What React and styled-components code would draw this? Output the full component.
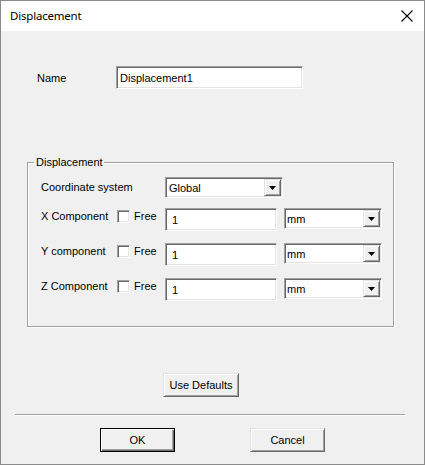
import React from "react";
import styled, { createGlobalStyle, css } from "styled-components";

const Global = createGlobalStyle`
  html, body { margin: 0; padding: 0; background: #f0f0f0; }
  body { font-family: "Liberation Sans", Arial, sans-serif; font-size: 11px; color: #000; }
  * { box-sizing: border-box; }
`;

const Window = styled.div`
  width: 425px;
  height: 465px;
  border: 1px solid #8a8a8a;
  background: #f0f0f0;
  display: flex;
  flex-direction: column;
`;

const TitleBar = styled.div`
  height: 30px;
  background: #fff;
  display: flex;
  align-items: center;
  justify-content: space-between;
  padding: 0 10px 0 9px;
  flex-shrink: 0;
`;

const Title = styled.span`
  font-family: "Segoe UI", "Noto Sans", sans-serif;
  font-size: 11.5px;
  letter-spacing: -0.2px;
  color: #000;
  margin-top: -1px;
`;

const CloseBtn = styled.div`
  width: 14px;
  height: 14px;
  display: flex;
  align-items: center;
  justify-content: center;
  margin-top: -1px;
`;

const Body = styled.div`
  display: flex;
  flex-direction: column;
  flex: 1;
`;

const NameRow = styled.div`
  display: flex;
  align-items: center;
  margin: 35px 0 0 36px;
  height: 23px;
`;

const NameLabel = styled.span`
  width: 79px;
`;

const sunken = css`
  border-style: solid;
  border-width: 1px;
  border-color: #a0a0a0 #fff #fff #a0a0a0;
  box-shadow: inset 1px 1px 0 #696969, inset -1px -1px 0 #e3e3e3;
  background: #fff;
`;

const raised = css`
  border-style: solid;
  border-width: 1px;
  border-color: #e3e3e3 #696969 #696969 #e3e3e3;
  box-shadow: inset 1px 1px 0 #fff, inset -1px -1px 0 #a0a0a0;
  background: #f0f0f0;
`;

const TextBox = styled.div`
  ${sunken};
  width: ${(p) => p.$w}px;
  height: 23px;
  display: flex;
  align-items: center;
  padding-left: ${(p) => p.$pl || 4}px;
  color: #000;
  white-space: nowrap;
`;

const Group = styled.div`
  position: relative;
  margin: 73px 0 0 26px;
  width: 367px;
  height: 165px;
  border: 1px solid #a0a0a0;
  box-shadow: 1px 1px 0 #fff, inset 1px 1px 0 #fff;
  padding: 14px 0 0 13px;
  display: flex;
  flex-direction: column;
`;

const Legend = styled.span`
  position: absolute;
  left: 6px;
  top: -7px;
  padding: 0 1px 0 2px;
  background: #f0f0f0;
  line-height: 13px;
`;

const Row = styled.div`
  display: flex;
  align-items: flex-start;
  margin-top: ${(p) => p.$mt || 0}px;
`;

const RowLabel = styled.span`
  width: ${(p) => p.$w}px;
  line-height: 13px;
  margin-top: ${(p) => p.$mt || 0}px;
`;

const Check = styled.div`
  ${sunken};
  width: 13px;
  height: 13px;
  margin-top: 2px;
`;

const CheckText = styled.span`
  width: 35px;
  padding-left: 4px;
  line-height: 13px;
  margin-top: 2px;
`;

const Combo = styled.div`
  ${sunken};
  width: ${(p) => p.$w}px;
  height: ${(p) => p.$h}px;
  margin-left: ${(p) => p.$ml || 0}px;
  display: flex;
  align-items: stretch;
  padding: 1px;
`;

const ComboText = styled.span`
  flex: 1;
  display: flex;
  align-items: center;
  padding-left: ${(p) => p.$pl || 2}px;
`;

const ComboArrow = styled.div`
  ${raised};
  width: 17px;
  display: flex;
  align-items: center;
  justify-content: center;
`;

const Arrow = () => (
  <svg width="7" height="4" viewBox="0 0 7 4">
    <path d="M0 0 H7 L3.5 4 Z" fill="#000" />
  </svg>
);

const Button = styled.div`
  ${raised};
  width: ${(p) => p.$w}px;
  height: 24px;
  display: flex;
  align-items: center;
  justify-content: center;
  ${(p) =>
    p.$default &&
    css`
      border-color: #000;
      box-shadow: inset 1px 1px 0 #fff, inset -1px -1px 0 #696969, inset -2px -2px 0 #a0a0a0;
    `}
`;

const DefaultsRow = styled.div`
  display: flex;
  margin: 46px 0 0 162px;
`;

const Separator = styled.div`
  margin: 17px 0 0 14px;
  width: 390px;
  height: 2px;
  border-top: 1px solid #a0a0a0;
  border-bottom: 1px solid #fff;
`;

const Footer = styled.div`
  display: flex;
  gap: 75px;
  margin: 12px 0 0 99px;
`;

const CompRow = ({ label, mt }) => (
  <Row $mt={mt}>
    <RowLabel $w={76} $mt={2}>{label}</RowLabel>
    <Check />
    <CheckText>Free</CheckText>
    <TextBox $w={112} $pl={6}>1</TextBox>
    <Combo $w={98} $h={21} $ml={7}>
      <ComboText $pl={1}>mm</ComboText>
      <ComboArrow>
        <Arrow />
      </ComboArrow>
    </Combo>
  </Row>
);

export default function App() {
  return (
    <>
      <Global />
      <Window>
        <TitleBar>
          <Title>Displacement</Title>
          <CloseBtn>
            <svg width="12" height="12" viewBox="0 0 12 12">
              <path d="M0.5 0.5 L11.5 11.5 M11.5 0.5 L0.5 11.5" stroke="#000" strokeWidth="1.1" />
            </svg>
          </CloseBtn>
        </TitleBar>
        <Body>
          <NameRow>
            <NameLabel>Name</NameLabel>
            <TextBox $w={187} $pl={3}>Displacement1</TextBox>
          </NameRow>
          <Group>
            <Legend>Displacement</Legend>
            <Row>
              <RowLabel $w={124} $mt={4}>Coordinate system</RowLabel>
              <Combo $w={118} $h={21}>
                <ComboText $pl={2}>Global</ComboText>
                <ComboArrow>
                  <Arrow />
                </ComboArrow>
              </Combo>
            </Row>
            <CompRow label="X Component" mt={10} />
            <CompRow label="Y component" mt={12} />
            <CompRow label="Z Component" mt={12} />
          </Group>
          <DefaultsRow>
            <Button $w={76}>Use Defaults</Button>
          </DefaultsRow>
          <Separator />
          <Footer>
            <Button $w={75} $default>OK</Button>
            <Button $w={75}>Cancel</Button>
          </Footer>
        </Body>
      </Window>
    </>
  );
}
